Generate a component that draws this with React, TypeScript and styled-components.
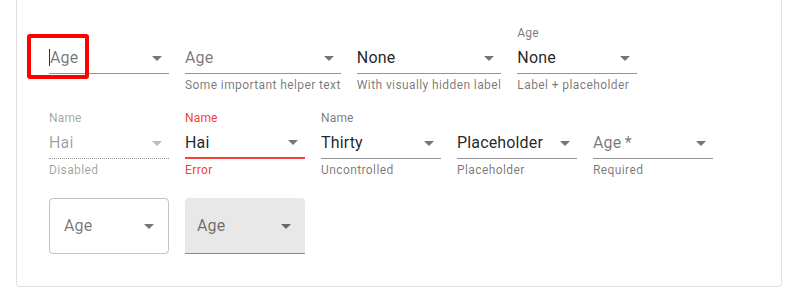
import styled, { createGlobalStyle, css } from "styled-components";

const GlobalStyle = createGlobalStyle`
  * {
    box-sizing: border-box;
  }
  body {
    margin: 0;
    background: #ffffff;
    font-family: Roboto, "Liberation Sans", Arial, sans-serif;
  }
`;

const Card = styled.div`
  margin: 0 17px 0 16px;
  padding: 18px 24px 24px;
  border: 1px solid #e0e0e0;
  border-top: none;
  border-radius: 0 0 4px 4px;
`;

const Row = styled.div<{ $offset?: number }>`
  display: flex;
  flex-wrap: wrap;
  align-items: flex-start;
  margin-top: ${(p) => p.$offset ?? 0}px;
`;

const Control = styled.div`
  position: relative;
  display: flex;
  flex-direction: column;
  min-width: 120px;
  margin: 8px;
`;

type Tone = "normal" | "disabled" | "error";

const labelColor = (t: Tone) =>
  t === "error" ? "#f44336" : t === "disabled" ? "rgba(0,0,0,0.38)" : "rgba(0,0,0,0.54)";

const Label = styled.div<{ $tone: Tone }>`
  height: 16px;
  font-size: 12px;
  line-height: 14px;
  letter-spacing: 0.15px;
  color: ${(p) => labelColor(p.$tone)};
  white-space: nowrap;
`;

const Input = styled.div<{ $tone: Tone }>`
  position: relative;
  height: 32px;
  padding: 6px 24px 6px 0;
  font-size: 16px;
  line-height: 19px;
  letter-spacing: 0.15px;
  white-space: nowrap;
  ${(p) =>
    p.$tone === "error"
      ? css`
          border-bottom: 2px solid #f44336;
          padding-bottom: 5px;
        `
      : p.$tone === "disabled"
      ? css`
          border-bottom: 1px dotted rgba(0, 0, 0, 0.42);
        `
      : css`
          border-bottom: 1px solid rgba(0, 0, 0, 0.42);
        `}
`;

const Value = styled.span<{ $muted?: boolean; $disabled?: boolean }>`
  color: ${(p) =>
    p.$disabled ? "rgba(0,0,0,0.38)" : p.$muted ? "rgba(0,0,0,0.54)" : "rgba(0,0,0,0.87)"};
`;

const Caret = styled.span`
  display: inline-block;
  width: 1px;
  height: 17px;
  vertical-align: -3px;
  background: #333333;
`;

const Helper = styled.div<{ $tone: Tone }>`
  margin-top: 3px;
  padding-bottom: 2px;
  font-size: 12px;
  line-height: 16px;
  letter-spacing: 0.4px;
  color: ${(p) => labelColor(p.$tone)};
  white-space: nowrap;
`;

const Arrow = styled.svg<{ $right?: number; $disabled?: boolean }>`
  position: absolute;
  right: ${(p) => p.$right ?? 0}px;
  top: calc(50% - 12px);
  width: 24px;
  height: 24px;
  fill: ${(p) => (p.$disabled ? "rgba(0,0,0,0.26)" : "rgba(0,0,0,0.54)")};
`;

const BoxInput = styled.div<{ $variant: "outlined" | "filled" }>`
  position: relative;
  width: 120px;
  height: 56px;
  font-size: 16px;
  line-height: 19px;
  letter-spacing: 0.15px;
  color: rgba(0, 0, 0, 0.54);
  ${(p) =>
    p.$variant === "outlined"
      ? css`
          padding: 17px 14px 0;
          border: 1px solid rgba(0, 0, 0, 0.23);
          border-radius: 4px;
        `
      : css`
          padding: 18px 12px 0;
          background: rgba(0, 0, 0, 0.09);
          border-bottom: 1px solid rgba(0, 0, 0, 0.42);
          border-radius: 4px 4px 0 0;
        `}
`;

const Highlight = styled.div`
  position: absolute;
  left: -22px;
  top: 8px;
  width: 62px;
  height: 45px;
  border: 4px solid #ff0000;
  border-radius: 3px;
  pointer-events: none;
`;

function DropIcon({ right, disabled }: { right?: number; disabled?: boolean }) {
  return (
    <Arrow viewBox="0 0 24 24" $right={right} $disabled={disabled}>
      <path d="M7 10l5 5 5-5z" />
    </Arrow>
  );
}

interface FieldProps {
  label?: string;
  value: React.ReactNode;
  placeholder?: boolean;
  helper?: string;
  tone?: Tone;
  children?: React.ReactNode;
}

function Field({ label, value, placeholder, helper, tone = "normal", children }: FieldProps) {
  return (
    <Control>
      <Label $tone={tone}>{label}</Label>
      <Input $tone={tone}>
        <Value $muted={placeholder} $disabled={tone === "disabled"}>
          {value}
        </Value>
        <DropIcon disabled={tone === "disabled"} />
      </Input>
      {helper && <Helper $tone={tone}>{helper}</Helper>}
      {children}
    </Control>
  );
}

export default function App() {
  return (
    <>
      <GlobalStyle />
      <Card>
        <Row>
          <Field
            value={
              <>
                <Caret />
                Age
              </>
            }
            placeholder
          >
            <Highlight />
          </Field>
          <Field value="Age" placeholder helper="Some important helper text" />
          <Field value="None" helper="With visually hidden label" />
          <Field label="Age" value="None" helper="Label + placeholder" />
        </Row>
        <Row>
          <Field label="Name" value="Hai" helper="Disabled" tone="disabled" />
          <Field label="Name" value="Hai" helper="Error" tone="error" />
          <Field label="Name" value="Thirty" helper="Uncontrolled" />
          <Field value="Placeholder" helper="Placeholder" />
          <Field value={"Age\u2009*"} placeholder helper="Required" />
        </Row>
        <Row $offset={2}>
          <Control>
            <BoxInput $variant="outlined">
              Age
              <DropIcon right={7} />
            </BoxInput>
          </Control>
          <Control>
            <BoxInput $variant="filled">
              Age
              <DropIcon right={7} />
            </BoxInput>
          </Control>
        </Row>
      </Card>
    </>
  );
}
